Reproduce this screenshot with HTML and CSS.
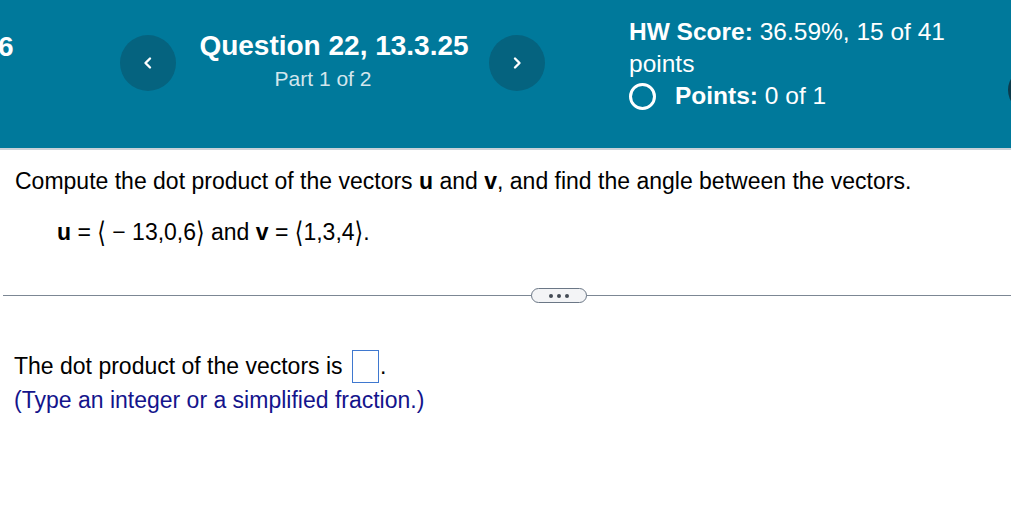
FILE: index.html
```html
<!DOCTYPE html>
<html>
<head>
<meta charset="utf-8">
<link rel="stylesheet" href="styles.css">
</head>
<body>
<header class="header">
  <div class="qnum">6</div>
  <div class="navbtn"><svg width="14" height="14" viewBox="0 0 14 14"><path d="M9 2.5 L4.5 7 L9 11.5" fill="none" stroke="#fff" stroke-width="2.4" stroke-linecap="round" stroke-linejoin="round"/></svg></div>
  <div class="qtitle">
    <div class="qname">Question 22, 13.3.25</div>
    <div class="qpart">Part 1 of 2</div>
  </div>
  <div class="navbtn next"><svg width="14" height="14" viewBox="0 0 14 14"><path d="M5 2.5 L9.5 7 L5 11.5" fill="none" stroke="#fff" stroke-width="2.4" stroke-linecap="round" stroke-linejoin="round"/></svg></div>
  <div class="score">
    <div class="scoreline"><b>HW Score:</b> 36.59%, 15 of 41 points</div>
    <div class="pointsline"><span class="ring"></span><b>Points:</b>&nbsp;0 of 1</div>
  </div>
  <div class="edgebtn"></div>
</header>
<main class="content">
  <p class="prompt">Compute the dot product of the vectors <b>u</b> and <b>v</b>, and find the angle between the vectors.</p>
  <p class="eq"><b>u</b> = <span class="br">⟨</span> − 13,0,6<span class="br">⟩</span> and <b>v</b> = <span class="br">⟨</span>1,3,4<span class="br">⟩</span>.</p>
  <div class="divider"><span class="pill"><i></i><i></i><i></i></span></div>
  <p class="answer">The dot product of the vectors is <span class="box"></span>.</p>
  <p class="hint">(Type an integer or a simplified fraction.)</p>
</main>
</body>
</html>
```
FILE: styles.css
```css
* { box-sizing: border-box; }
html, body { margin: 0; padding: 0; background: #fff; }
body { font-family: "Liberation Sans", Arial, sans-serif; color: #000; width: 1011px; overflow: hidden; }

.header {
  position: relative;
  display: flex;
  align-items: flex-start;
  height: 150px;
  background: #00799b;
  border-bottom: 2px solid #c9d1d8;
  color: #fff;
  overflow: hidden;
}
.qnum {
  font-size: 28px;
  font-weight: bold;
  line-height: 34px;
  margin-top: 30px;
  margin-left: -2px;
  width: 122px;
}
.navbtn {
  width: 56px;
  height: 56px;
  border-radius: 50%;
  background: #05637f;
  margin-top: 35px;
  display: flex;
  align-items: center;
  justify-content: center;
}
.navbtn.next { margin-left: 17px; }
.qtitle {
  margin-left: 20px;
  width: 276px;
  margin-top: 29px;
  text-align: center;
}
.qname { font-size: 28px; font-weight: bold; line-height: 34px; }
.qpart { font-size: 21px; line-height: 28px; margin-top: 2px; color: #d3e6ed; padding-right: 22px; }
.score {
  margin-left: 84px;
  margin-top: 16px;
  width: 330px;
  font-size: 24.5px;
  line-height: 32px;
}
.pointsline { display: flex; align-items: center; }
.ring {
  display: inline-block;
  width: 27px;
  height: 27px;
  border: 3px solid #fff;
  border-radius: 50%;
  margin-right: 19px;
}
.edgebtn {
  position: absolute;
  left: 1008px;
  top: 68px;
  width: 44px;
  height: 44px;
  border-radius: 50%;
  background: #0b3b4c;
}

.content { padding: 0 0 0 15px; }
.prompt { margin: 18px 0 0 0; font-size: 23px; line-height: 27px; }
.eq { margin: 24px 0 0 42px; font-size: 23px; line-height: 27px; }
.br { font-family: "DejaVu Sans", sans-serif; font-size: 22px; line-height: 0; display: inline-block; transform: scaleY(1.3); }
.divider {
  margin: 49px 0 0 -12px;
  height: 1px;
  background: #7c8794;
  position: relative;
  display: flex;
  justify-content: center;
}
.pill {
  position: absolute;
  top: -7px;
  left: 528px;
  width: 56px;
  height: 15px;
  border: 1px solid #6b7786;
  border-radius: 8px;
  background: #f3f4f6;
  display: flex;
  align-items: center;
  justify-content: center;
  gap: 4px;
}
.pill i { width: 4px; height: 4px; border-radius: 50%; background: #444b55; display: block; }
.answer { margin: 53px 0 0 -1px; font-size: 23px; line-height: 34px; }
.box {
  display: inline-block;
  width: 27px;
  height: 33px;
  border: 1px solid #3f78cf;
  vertical-align: -9px;
  margin-left: 3px;
  margin-right: 1px;
  background: #fff;
}
.hint { margin: 0 0 0 -1px; font-size: 23px; line-height: 34px; color: #14148c; }
```
